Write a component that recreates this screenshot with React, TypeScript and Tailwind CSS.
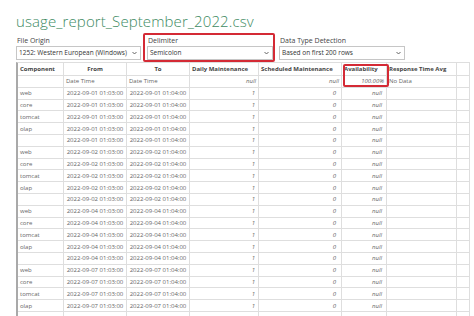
import React from 'react';

const font = { fontFamily: '"Open Sans", "Noto Sans", sans-serif' };

const cols = 'grid grid-cols-[46px_63px_63px_69px_83px_45px_70px_13px]';

const Chevron = () => (
  <svg width="5" height="4" viewBox="0 0 5 4" className="shrink-0">
    <path d="M0.5 1 L2.5 3 L4.5 1" fill="none" stroke="#555" strokeWidth="0.9" />
  </svg>
);

const Dropdown = ({ label, value, width }: { label: string; value: string; width: string }) => (
  <div className={`flex flex-col ${width}`}>
    <div className="text-[7px] leading-[11px] text-[#444] pl-[1px] whitespace-nowrap">{label}</div>
    <div className="h-[14px] border border-[#c6c6c6] flex items-center justify-between pl-[2px] pr-[3px]">
      <span className="text-[6.5px] text-[#333] leading-none whitespace-nowrap">{value}</span>
      <Chevron />
    </div>
  </div>
);

const groups = ['2022-09-01', '2022-09-02', '2022-09-04', '2022-09-07'];
const comps = ['web', 'core', 'tomcat', 'olap', ''];

const rows: { comp: string; date: string }[] = [];
groups.forEach((d) => comps.forEach((c) => rows.push({ comp: c, date: d })));
rows.pop();

const cell = 'border-r border-b border-[#dedede] h-[11.8px] flex items-center px-[2px] text-[6px] leading-none whitespace-nowrap overflow-hidden';

const App = () => {
  return (
    <div className="w-[474px] h-[316px] overflow-hidden bg-white" style={font}>
      <div className="pl-[16px] pt-[12px]">
        <div className="text-[15px] leading-[18px] text-[#3d8a62] font-light tracking-[0.1px]">
          usage_report_September_2022.csv
        </div>
        <div className="flex items-start mt-[3px] h-[27px]">
          <div className="pt-[2px]">
            <Dropdown label="File Origin" value="1252: Western European (Windows)" width="w-[125px]" />
          </div>
          <div className="ml-[2px] border-2 border-[#d42a35] rounded-[2px] px-[2px] w-[132px]">
            <Dropdown label="Delimiter" value="Semicolon" width="w-[126px]" />
          </div>
          <div className="ml-[4px] pt-[2px]">
            <Dropdown label="Data Type Detection" value="Based on first 200 rows" width="w-[126px]" />
          </div>
        </div>

        <div className="relative mt-[2px] w-[454px] border-l-2 border-[#a9a9a9] border-t border-t-[#dedede]">
          <div className={`${cols} text-[#444] font-bold`}>
            <div className={`${cell} h-[13px] text-[6.3px]`}>Component</div>
            <div className={`${cell} h-[13px] text-[6.3px] justify-center`}>From</div>
            <div className={`${cell} h-[13px] text-[6.3px] justify-center`}>To</div>
            <div className={`${cell} h-[13px] text-[6.3px]`}>Daily Maintenance</div>
            <div className={`${cell} h-[13px] text-[6.3px]`}>Scheduled Maintenance</div>
            <div className={`${cell} h-[13px] text-[6.3px]`}>Availability</div>
            <div className={`${cell} h-[13px] text-[6.3px]`}>Response Time Avg</div>
            <div className={`${cell} h-[13px]`}></div>
          </div>
          <div className={`${cols} text-[#666]`}>
            <div className={cell}></div>
            <div className={cell}>Date Time</div>
            <div className={cell}>Date Time</div>
            <div className={`${cell} justify-end italic`}>null</div>
            <div className={`${cell} justify-end italic`}>null</div>
            <div className={`${cell} justify-end italic`}>100.00%</div>
            <div className={cell}>No Data</div>
            <div className={cell}></div>
          </div>
          {rows.map((r, i) => (
            <div key={i} className={`${cols} text-[#666]`}>
              <div className={cell}>{r.comp}</div>
              <div className={`${cell} justify-center`}>{r.date} 01:03:00</div>
              <div className={`${cell} justify-center`}>{r.date} 01:04:00</div>
              <div className={`${cell} justify-end italic pr-[3px]`}>1</div>
              <div className={`${cell} justify-end italic pr-[5px]`}>0</div>
              <div className={`${cell} justify-end italic pr-[4px]`}>null</div>
              <div className={cell}></div>
              <div className={cell}></div>
            </div>
          ))}
          <div className={cols}>
            {Array.from({ length: 8 }).map((_, i) => (
              <div key={i} className={cell}></div>
            ))}
          </div>
          <div className="absolute left-[325px] top-[1px] w-[46px] h-[23px] border-2 border-[#d42a35] rounded-[2px]" />
        </div>
      </div>
    </div>
  );
};

export default App;
